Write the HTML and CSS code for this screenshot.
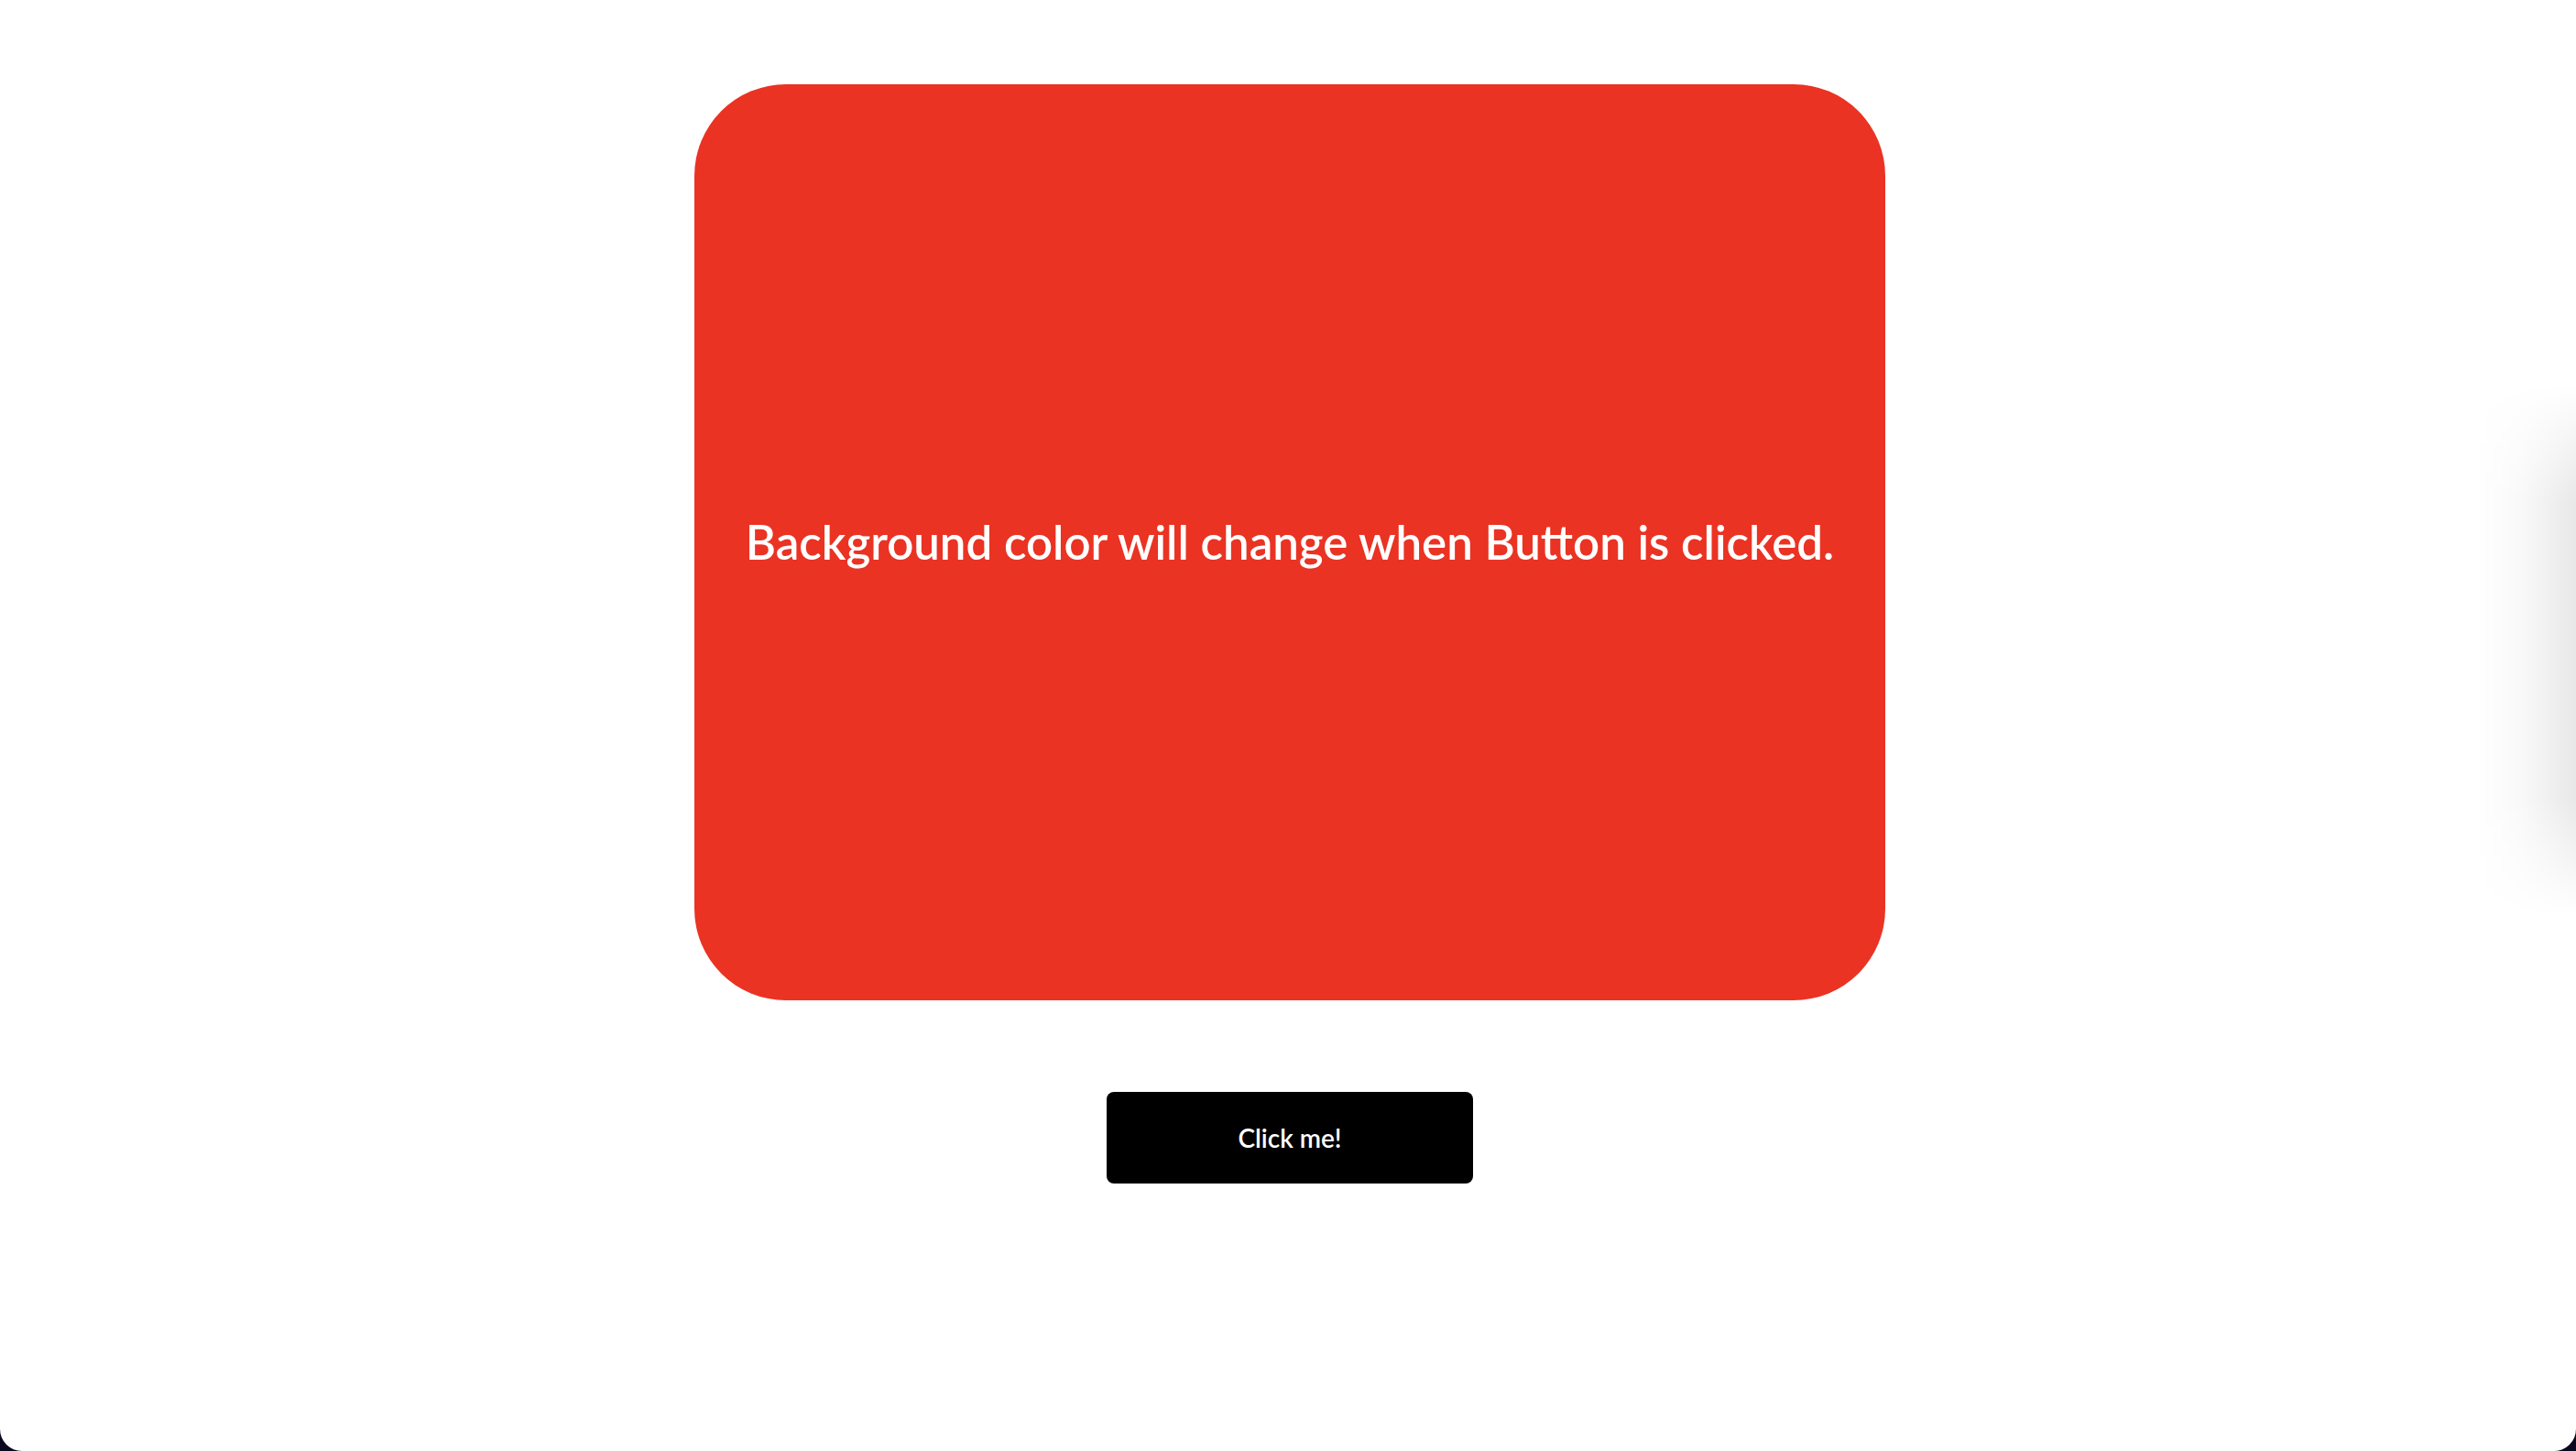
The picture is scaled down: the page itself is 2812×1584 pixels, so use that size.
FILE: index.html
```html
<!DOCTYPE html>
<html lang="en">
<head>
<meta charset="utf-8">
<title>Background Color Changer</title>
<link rel="stylesheet" href="styles.css">
</head>
<body>
<main class="page">
  <section class="panel">
    <p class="panel-text">Background color will change when Button is clicked.</p>
  </section>
  <button class="btn" type="button">Click me!</button>
</main>
<div class="side-shadow"></div>
</body>
</html>
```

FILE: styles.css
```css
html {
  margin: 0;
  padding: 0;
  background: #0b0920;
  height: 100%;
  overflow: hidden;
}
body {
  margin: 0;
  height: 1584px;
  background: #ffffff;
  border-radius: 0 0 24px 24px;
  overflow: hidden;
  position: relative;
  font-family: "Lato", "Open Sans", "Liberation Sans", sans-serif;
}
.page {
  display: flex;
  flex-direction: column;
  align-items: center;
  padding: 92px 0 0 4px;
  gap: 100px;
}
.panel {
  width: 1300px;
  height: 1000px;
  background: #ea3323;
  border-radius: 100px;
  display: flex;
  align-items: center;
  justify-content: center;
}
.panel-text {
  margin: 0;
  color: #ffffff;
  font-size: 51px;
  font-weight: 600;
  line-height: 1;
  padding-bottom: 2px;
  white-space: nowrap;
}
.btn {
  width: 400px;
  height: 100px;
  background: #000000;
  color: #ffffff;
  border: none;
  border-radius: 8px;
  font-family: "Lato", "Open Sans", "Liberation Sans", sans-serif;
  font-size: 28px;
  font-weight: 600;
  padding: 0;
  cursor: pointer;
}
.side-shadow {
  position: absolute;
  right: 0;
  top: 420px;
  width: 110px;
  height: 580px;
  background: linear-gradient(to right, rgba(0, 0, 0, 0) 0%, rgba(0, 0, 0, 0.025) 45%, rgba(0, 0, 0, 0.09) 100%);
  -webkit-mask-image: linear-gradient(to bottom, transparent 0%, #000 22%, #000 78%, transparent 100%);
  mask-image: linear-gradient(to bottom, transparent 0%, #000 22%, #000 78%, transparent 100%);
  pointer-events: none;
}
```
